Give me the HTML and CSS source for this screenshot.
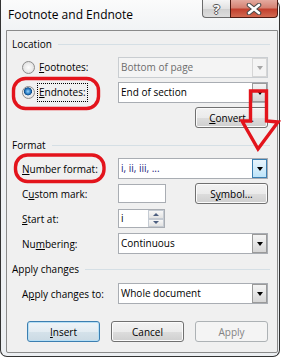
FILE: index.html
```html
<!DOCTYPE html>
<html>
  <head>
    <meta charset="utf-8">
    <title>Footnote and Endnote</title>
    <link rel="stylesheet" href="styles.css">
  </head>
  <body>
    <div class="window">
      <div class="titlebar">
        <span class="title">Footnote and Endnote</span>
        <div class="caption-btns">
          <span class="cap-btn cap-help">?</span>
          <span class="cap-btn cap-close">
            <svg width="16" height="12" viewBox="0 0 16 12">
              <path d="M3 2 L13 10 M13 2 L3 10" stroke="#4a4a4a" stroke-width="4.6" stroke-linecap="round"/>
              <path d="M3 2 L13 10 M13 2 L3 10" stroke="#fff" stroke-width="2.6" stroke-linecap="round"/>
            </svg>
          </span>
        </div>
      </div>

      <div class="client">
        <!-- Location -->
        <div class="group-head">Location</div>
        <div class="field first">
          <label class="radio-label"><span class="radio"></span><span class="radio-text"><u>F</u>ootnotes:</span></label>
          <div class="combo disabled"><span class="combo-text">Bottom of page</span><span class="combo-btn"></span></div>
        </div>
        <div class="field">
          <label class="radio-label"><span class="radio checked"></span><span class="radio-text focus"><u>E</u>ndnotes:</span></label>
          <div class="combo"><span class="combo-text">End of section</span><span class="combo-btn"></span></div>
        </div>
        <div class="field">
          <span></span>
          <button type="button" class="btn btn-right"><u>C</u>onvert...</button>
        </div>

        <!-- Format -->
        <div class="group-head gap-lg">Format</div>
        <div class="field first">
          <span class="label"><u>N</u>umber format:</span>
          <div class="combo"><span class="combo-text blue">i, ii, iii, ...</span><span class="combo-btn hot"></span></div>
        </div>
        <div class="field">
          <span class="label">C<u>u</u>stom mark:</span>
          <div class="control-row">
            <span class="textbox"></span>
            <button type="button" class="btn">S<u>y</u>mbol...</button>
          </div>
        </div>
        <div class="field gap-md">
          <span class="label"><u>S</u>tart at:</span>
          <div class="spin">
            <span class="spin-text">i</span>
            <span class="spin-btns"><span class="spin-up"></span><span class="spin-down"></span></span>
          </div>
        </div>
        <div class="field gap-md">
          <span class="label">Nu<u>m</u>bering:</span>
          <div class="combo"><span class="combo-text">Continuous</span><span class="combo-btn"></span></div>
        </div>

        <!-- Apply changes -->
        <div class="group-head gap-apply">Apply changes</div>
        <div class="field apply-row">
          <span class="label">A<u>p</u>ply changes to:</span>
          <div class="combo"><span class="combo-text">Whole document</span><span class="combo-btn"></span></div>
        </div>

        <div class="buttons">
          <button type="button" class="btn btn-default"><u>I</u>nsert</button>
          <button type="button" class="btn">Cancel</button>
          <button type="button" class="btn" disabled>Apply</button>
        </div>
      </div>

      <!-- red marks drawn over the dialog -->
      <svg class="marks" width="284" height="361" viewBox="0 0 284 361">
        <rect x="13.5" y="78.5" width="85" height="30" rx="12" fill="none" stroke="#e3141c" stroke-width="3.4"/>
        <rect x="15.5" y="155" width="88.5" height="26.5" rx="12" fill="none" stroke="#e3141c" stroke-width="3.4"/>
        <polygon points="250.5,91 266.5,91 266.5,121 278,122 258,149 242,121 250.5,121" fill="none" stroke="#e3141c" stroke-width="3.4"/>
      </svg>
    </div>
  </body>
</html>
```

FILE: styles.css
```css
*{box-sizing:border-box}
body{margin:0;background:#fff;font-family:"Open Sans","Noto Sans",sans-serif;font-size:10px;color:#000}
u{text-decoration:underline;text-underline-offset:1px}
button{font-family:inherit;font-size:inherit;margin:0;padding:0;cursor:pointer}

.window{position:relative;width:280px;padding:0 1px 3px 5px;border:1px solid #333;border-top:0;border-radius:0 7px 7px 7px;
  background:linear-gradient(to bottom,#fbfbfb 0,#f1f3f5 30px,#eceff2 100%)}
.titlebar{display:flex;align-items:flex-start;height:30px}
.title{padding:7px 0 0 2px;font-size:12px;line-height:16px}
.caption-btns{display:flex;margin-left:auto}
.cap-btn{display:flex;align-items:center;justify-content:center;height:18px;border:1px solid #6b6b6b;border-top:0}
.cap-help{width:28px;border-right:0;border-radius:0 0 0 4px;color:#fff;font-weight:bold;font-size:13px;
  text-shadow:-1px 0 #555,1px 0 #555,0 -1px #555,0 1px #555;
  background:linear-gradient(to bottom,#f6f6f6 0,#e2e2e2 50%,#cfcfcf 51%,#dedede 100%)}
.cap-close{width:48px;border-color:#4f1a12;border-radius:0 0 4px 0;
  background:linear-gradient(to bottom,#e4aa9f 0,#d58273 45%,#c2402e 55%,#d26a52 100%)}

.client{border:1px solid #8a8a8a;border-radius:0 0 2px 2px;background:#f0f0f0;padding:6px 7px 10px 5px}

.group-head{display:flex;align-items:center;gap:6px;height:14px;line-height:14px}
.group-head::after{content:"";flex:1;border-top:1px solid #d5dfe5}
.gap-lg{margin-top:10px}
.gap-apply{margin-top:8px}

.field{display:grid;grid-template-columns:96px 150px;align-items:center;padding-left:10px;margin-top:4px}
.field.first{margin-top:6px}
.field.gap-md{margin-top:5px}
.field.apply-row{margin-top:7px}
.label{white-space:nowrap}

.radio-label{display:flex;align-items:center;gap:2px}
.radio{width:13px;height:13px;border-radius:50%;border:1px solid #8c8c8c;
  background:radial-gradient(circle at 50% 50%,#fdfdfd 0,#e9e9e9 55%,#d2d2d2 100%)}
.radio.checked{background:radial-gradient(circle at 45% 40%,#9fd6fb 0,#2a7fc6 28%,#0d4a86 42%,#eeeeee 48%,#dcdcdc 100%)}
.radio-text{padding:1px 1px 2px;border:1px dotted transparent}
.radio-text.focus{border-color:#000}

.combo{display:flex;height:21px;background:#fff;border:1px solid #a9adb3}
.combo-text{flex:1;padding-left:2px;line-height:19px;white-space:nowrap}
.combo-text.blue{color:#1c1c7a}
.combo-btn{display:flex;align-items:center;justify-content:center;width:15px;border:1px solid #9a9a9a;
  background:linear-gradient(to bottom,#f4f4f4 0,#e6e6e6 50%,#d6d6d6 100%)}
.combo-btn::after{content:"";border-style:solid;border-width:4px 3.5px 0;border-color:#000 transparent transparent}
.combo-btn.hot{border-color:#3c7fb1;background:linear-gradient(to bottom,#e8f5fd 0,#d4edfb 50%,#bde4f9 100%)}
.combo.disabled{background:#f4f4f4;border-color:#c9cdd1;color:#6d6d6d}
.combo.disabled .combo-btn{border-color:#d6d6d6;background:#f4f4f4}
.combo.disabled .combo-btn::after{border-top-color:#a6a6a6}

.control-row{display:flex;align-items:center;justify-content:space-between}
.textbox{width:48px;height:19px;background:#fff;border:1px solid #a9adb3}

.spin{display:flex;width:47px;height:19px;background:#fff;border:1px solid #a9adb3}
.spin-text{flex:1;padding-left:2px;line-height:17px}
.spin-btns{display:flex;flex-direction:column;width:16px}
.spin-up,.spin-down{flex:1;display:flex;align-items:center;justify-content:center;border:1px solid #c5cbd3;
  background:linear-gradient(to bottom,#f7f7f7,#e3e3e3)}
.spin-up::after{content:"";border-style:solid;border-width:0 3px 3px;border-color:transparent transparent #4d5f80}
.spin-down::after{content:"";border-style:solid;border-width:3px 3px 0;border-color:#4d5f80 transparent transparent}

.btn{width:73px;height:21px;border:1px solid #707070;border-radius:3px;color:#000;
  background:linear-gradient(to bottom,#f2f2f2 0,#ebebeb 50%,#dddddd 51%,#cfcfcf 100%);
  box-shadow:inset 0 0 0 1px #fbfbfb}
.btn-right{justify-self:end}
.btn-default{border-color:#3c7fb1;box-shadow:inset 0 0 0 1px #b7dff5;
  background:linear-gradient(to bottom,#eef4f8 0,#e3ecf2 50%,#d5e2ea 51%,#cbdae4 100%)}
.btn:disabled{border-color:#adb2b5;background:#f4f4f4;color:#838383;box-shadow:none;cursor:default}
.buttons{display:flex;gap:11px;padding-left:15px;margin-top:17px}

.marks{position:absolute;left:-1px;top:0;pointer-events:none}
```
